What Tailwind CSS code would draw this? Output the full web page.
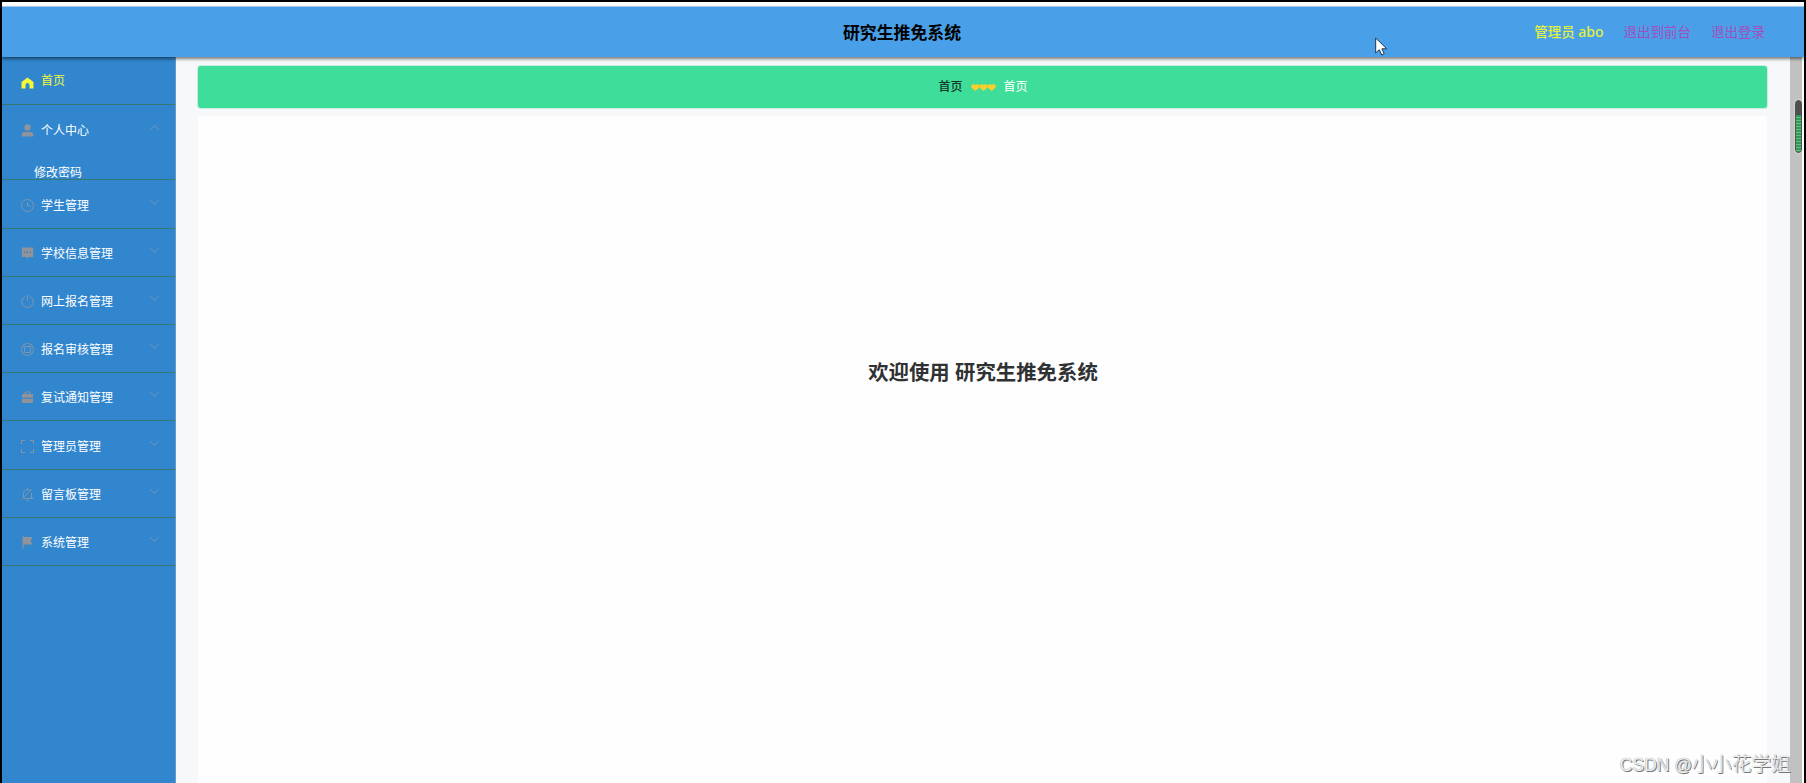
<!DOCTYPE html>
<html lang="zh-CN">
<head>
  <meta charset="UTF-8">
  <meta name="viewport" content="width=device-width, initial-scale=1.0">
  <title>研究生推免系统</title>
  <script src="https://cdn.jsdelivr.net/npm/@tailwindcss/browser@4"></script>
</head>
<body class="h-[783px] overflow-hidden bg-white font-['Noto_Sans','Noto_Sans_CJK_SC',sans-serif]">
  <div class="relative flex h-[783px] flex-col border-x-2 border-t-2 border-black bg-white pt-[4px]">
    <!-- Header -->
    <header class="relative z-10 grid h-[51px] shrink-0 grid-cols-[1fr_auto_1fr] items-center border-t border-[#a9cbe8] bg-[#49a0e9] pt-px shadow-[0_2px_3px_rgba(0,0,0,0.5)]">
      <span></span>
      <h1 class="pr-[2px] text-[16.9px] leading-6 font-bold text-black">研究生推免系统</h1>
      <nav class="flex justify-end gap-[20px] pr-[39px] pb-[2px] text-[13.5px] leading-5 whitespace-nowrap text-[#a24fbd]">
        <span class="font-medium text-[#e3f03c]">管理员 <span class="text-[14px]">abo</span></span>
        <a>退出到前台</a>
        <a>退出登录</a>
      </nav>
    </header>

    <div class="flex min-h-0 flex-1">
      <!-- Sidebar -->
      <aside class="w-[174px] shrink-0 border-r border-[#5f9ccb] bg-[#3186ce] text-[12px] leading-4 text-white">
        <div class="flex h-[48px] items-start border-b border-[#387872] pt-[16px] pl-[19px] text-[#f4f83a]">
          <svg class="mt-[4px] mr-[7px] size-[13px]" viewBox="0 0 13 13" fill="currentColor"><path d="M6.500 0.500 L12.500 5 V11.500 H8.500 V8 A2 2 0 0 0 4.500 8 V11.500 H0.500 V5 Z"/></svg>
          <span>首页</span>
        </div>
        <div class="h-[75px] overflow-hidden border-b border-[#387872]">
          <div class="flex h-[48px] items-center pt-[2px] pl-[19px]">
            <svg class="mr-[7px] size-[13px] text-[#909399]" viewBox="0 0 13 13" fill="currentColor"><circle cx="6.500" cy="3.500" r="3.200"/><path d="M0.800 12.500 V10.500 Q0.800 8 3.300 8 H9.700 Q12.200 8 12.200 10.500 V12.500 Z"/></svg>
            <span class="pt-px">个人中心</span>
            <svg class="mr-[16px] mb-[6px] ml-auto h-[5px] w-[9px]" viewBox="0 0 9 5" fill="none" stroke="#7896b4"><path d="M0.500 4.500 L4.500 0.700 L8.500 4.500"/></svg>
          </div>
          <div class="pt-[12px] pl-[32px]">修改密码</div>
        </div>
        <div class="flex h-[49px] items-center border-b border-[#387872] pt-[2px] pl-[19px]">
          <svg class="mr-[7px] size-[13px]" viewBox="0 0 13 13" fill="none" stroke="#8296ab"><circle cx="6.500" cy="6.500" r="6"/><path d="M6.500 3 V7 H9.700"/></svg>
          <span class="pt-px">学生管理</span>
          <svg class="mr-[16px] mb-[6px] ml-auto h-[5px] w-[9px]" viewBox="0 0 9 5" fill="none" stroke="#7896b4"><path d="M0.500 0.500 L4.500 4.300 L8.500 0.500"/></svg>
        </div>
        <div class="flex h-[48px] items-center border-b border-[#387872] pt-[2px] pl-[19px]">
          <svg class="mr-[7px] size-[13px]" viewBox="0 0 13 13" fill="#909399"><path d="M0.800 0.500 H12.200 V10 H8 L6.500 11.800 L5 10 H0.800 Z"/><g fill="#3f7fb8"><circle cx="3.700" cy="5.300" r="0.800"/><circle cx="6.500" cy="5.300" r="0.800"/><circle cx="9.300" cy="5.300" r="0.800"/></g></svg>
          <span class="pt-px">学校信息管理</span>
          <svg class="mr-[16px] mb-[6px] ml-auto h-[5px] w-[9px]" viewBox="0 0 9 5" fill="none" stroke="#7896b4"><path d="M0.500 0.500 L4.500 4.300 L8.500 0.500"/></svg>
        </div>
        <div class="flex h-[48px] items-center border-b border-[#387872] pt-[2px] pl-[19px]">
          <svg class="mr-[7px] size-[13px]" viewBox="0 0 13 13" fill="none" stroke="#8296ab"><path d="M4.300 1.500 A5.700 5.700 0 1 0 8.700 1.500 M6.500 0 V6"/></svg>
          <span class="pt-px">网上报名管理</span>
          <svg class="mr-[16px] mb-[6px] ml-auto h-[5px] w-[9px]" viewBox="0 0 9 5" fill="none" stroke="#7896b4"><path d="M0.500 0.500 L4.500 4.300 L8.500 0.500"/></svg>
        </div>
        <div class="flex h-[48px] items-center border-b border-[#387872] pt-[2px] pl-[19px]">
          <svg class="mr-[7px] size-[13px]" viewBox="0 0 13 13" fill="none" stroke="#8296ab"><circle cx="6.500" cy="6.500" r="6"/><rect x="3.500" y="3.500" width="6" height="6" rx="1.500"/><path d="M3.500 4 L2.500 2.500 M9.500 4 L10.500 2.500 M3.500 9 L2.500 10.500 M9.500 9 L10.500 10.500"/></svg>
          <span class="pt-px">报名审核管理</span>
          <svg class="mr-[16px] mb-[6px] ml-auto h-[5px] w-[9px]" viewBox="0 0 9 5" fill="none" stroke="#7896b4"><path d="M0.500 0.500 L4.500 4.300 L8.500 0.500"/></svg>
        </div>
        <div class="flex h-[48px] items-center border-b border-[#387872] pt-[2px] pl-[19px]">
          <svg class="mr-[7px] size-[13px]" viewBox="0 0 13 13" fill="#909399"><path d="M4 3 V1 H9 V3" fill="none" stroke="#909399"/><path d="M1 3 H12 V6.800 H1 Z M1 7.800 H12 V12 H1 Z"/></svg>
          <span class="pt-px">复试通知管理</span>
          <svg class="mr-[16px] mb-[6px] ml-auto h-[5px] w-[9px]" viewBox="0 0 9 5" fill="none" stroke="#7896b4"><path d="M0.500 0.500 L4.500 4.300 L8.500 0.500"/></svg>
        </div>
        <div class="flex h-[49px] items-center border-b border-[#387872] pt-[2px] pl-[19px]">
          <svg class="mr-[7px] size-[13px]" viewBox="0 0 13 13" fill="none" stroke="#8496a8"><path d="M4 0.500 H0.500 V4 M9 0.500 H12.500 V4 M12.500 9 V12.500 H9 M4 12.500 H0.500 V9"/></svg>
          <span class="pt-px">管理员管理</span>
          <svg class="mr-[16px] mb-[6px] ml-auto h-[5px] w-[9px]" viewBox="0 0 9 5" fill="none" stroke="#7896b4"><path d="M0.500 0.500 L4.500 4.300 L8.500 0.500"/></svg>
        </div>
        <div class="flex h-[48px] items-center border-b border-[#387872] pt-[2px] pl-[19px]">
          <svg class="mr-[7px] size-[13px]" viewBox="0 0 13 13" fill="none" stroke="#8296ab"><path d="M2.500 9 V5.500 A4 4 0 0 1 9 2.500 M10.500 4.500 V10.500 M6.500 0 V1.500 M3 10.500 H12.500 M0.500 11.500 L11 0.800 M5.500 12.500 H7.500"/></svg>
          <span class="pt-px">留言板管理</span>
          <svg class="mr-[16px] mb-[6px] ml-auto h-[5px] w-[9px]" viewBox="0 0 9 5" fill="none" stroke="#7896b4"><path d="M0.500 0.500 L4.500 4.300 L8.500 0.500"/></svg>
        </div>
        <div class="flex h-[48px] items-center border-b border-[#387872] pt-[2px] pl-[19px]">
          <svg class="mr-[7px] size-[13px]" viewBox="0 0 13 13" fill="#909399"><path d="M1.500 0.300 H2.700 V12.800 H1.500 Z M2.700 1 H11.500 L9.700 4.800 L11.500 8.500 H2.700 Z"/></svg>
          <span class="pt-px">系统管理</span>
          <svg class="mr-[16px] mb-[6px] ml-auto h-[5px] w-[9px]" viewBox="0 0 9 5" fill="none" stroke="#7896b4"><path d="M0.500 0.500 L4.500 4.300 L8.500 0.500"/></svg>
        </div>
      </aside>

      <!-- Content -->
      <main class="flex flex-1 flex-col bg-[#f6f8fa] pt-[9px] pr-[23px] pl-[22px]">
        <div class="flex h-[42px] shrink-0 items-center justify-center rounded-[3px] bg-[#3fdd9a] pl-px text-[12px] leading-4 ring-1 ring-[#c9eee0]">
          <span class="font-medium text-[#14352a]">首页</span>
          <svg class="mx-[8px] h-[7px] w-[25px]" viewBox="0 0 25 7" fill="#fbce2b"><path d="M4.300 7 L0.300 3.500 V1.500 L1.500 0.200 H3.300 L4.300 1 L5.300 0.200 H7.100 L8.400 1.500 V3.500 Z"/><path d="M12.500 7 L8.500 3.500 V1.500 L9.700 0.200 H11.500 L12.500 1 L13.500 0.200 H15.300 L16.500 1.500 V3.500 Z"/><path d="M20.700 7 L16.600 3.500 V1.500 L17.900 0.200 H19.700 L20.700 1 L21.700 0.200 H23.500 L24.700 1.500 V3.500 Z"/></svg>
          <span class="text-white">首页</span>
        </div>
        <div class="mt-[8px] flex flex-1 justify-center bg-[#fefefe] pt-[240px] pl-px">
          <h2 class="text-[20.4px] leading-8 font-bold text-[#303133]">欢迎使用 研究生推免系统</h2>
        </div>
      </main>

      <!-- Scrollbar -->
      <div class="mr-[2px] flex w-[12px] justify-end bg-[#c1c1c1] pt-[43px]">
        <div class="flex h-[53px] w-[7px] flex-col overflow-hidden rounded-full border border-[#505050] bg-[#505050] pt-[14px] shadow-[0_0_2px_#fff]">
          <div class="flex-1 bg-[repeating-linear-gradient(#2f9a55_0_2px,#6bbd82_2px_3px)]"></div>
        </div>
      </div>
    </div>

    <!-- Mouse pointer -->
    <svg class="absolute top-[35px] left-[1373px] z-20 h-[19px] w-[13px]" viewBox="0 0 13 19" fill="#fff" stroke="#1d3550"><path d="M0.700 1 V16 L4.300 12.700 L6.700 18 L9.200 16.900 L6.900 11.800 H11.700 Z"/></svg>

    <!-- Watermark -->
    <div class="absolute right-[13px] bottom-[4px] z-20 font-['Liberation_Sans','Noto_Sans_CJK_SC',sans-serif] text-[17.5px] leading-[28px] font-light whitespace-nowrap text-[#eeeeee] [text-shadow:1px_1px_0_#777,0_0_1px_#888]">CSDN @<span class="text-[19.8px]">小小花学姐</span></div>
  </div>
</body>
</html>
